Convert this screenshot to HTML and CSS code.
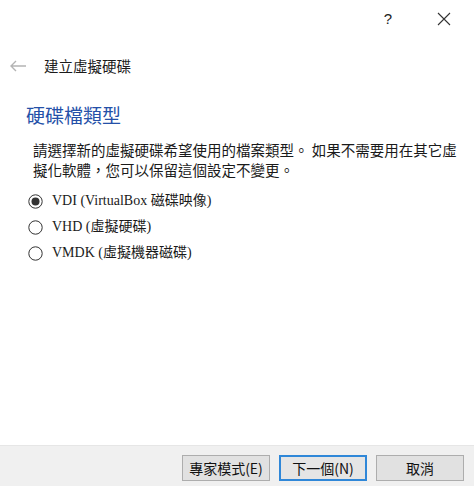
FILE: index.html
```html
<!DOCTYPE html>
<html lang="zh-Hant">
<head>
<meta charset="utf-8">
<title>建立虛擬硬碟</title>
<link rel="stylesheet" href="styles.css">
</head>
<body>
<div class="window">
  <div class="titlebar">
    <span class="help">?</span>
    <svg class="close" width="14" height="14" viewBox="0 0 14 14"><path d="M1 1 L13 13 M13 1 L1 13" stroke="#333" stroke-width="1.1" fill="none"/></svg>
  </div>
  <div class="nav">
    <svg class="back" width="18" height="12" viewBox="0 0 18 12"><path d="M17 6 H2 M7 1 L2 6 L7 11" stroke="#b4b4b4" stroke-width="1.4" fill="none"/></svg>
    <span class="nav-title">建立虛擬硬碟</span>
  </div>
  <div class="content">
    <h1 class="heading">硬碟檔類型</h1>
    <p class="desc">請選擇新的虛擬硬碟希望使用的檔案類型。 如果不需要用在其它虛擬化軟體，您可以保留這個設定不變更。</p>
    <div class="options">
      <div class="option">
        <svg class="radio" width="15" height="15" viewBox="0 0 15 15"><circle cx="7.5" cy="7.5" r="6.7" fill="#fff" stroke="#333" stroke-width="1"/><circle cx="7.5" cy="7.5" r="4" fill="#333"/></svg>
        <span class="label">VDI (VirtualBox 磁碟映像)</span>
      </div>
      <div class="option">
        <svg class="radio" width="15" height="15" viewBox="0 0 15 15"><circle cx="7.5" cy="7.5" r="6.7" fill="#fff" stroke="#333" stroke-width="1"/></svg>
        <span class="label">VHD (虛擬硬碟)</span>
      </div>
      <div class="option">
        <svg class="radio" width="15" height="15" viewBox="0 0 15 15"><circle cx="7.5" cy="7.5" r="6.7" fill="#fff" stroke="#333" stroke-width="1"/></svg>
        <span class="label">VMDK (虛擬機器磁碟)</span>
      </div>
    </div>
  </div>
  <div class="footer">
    <button class="btn">專家模式(E)</button>
    <button class="btn default">下一個(N)</button>
    <button class="btn">取消</button>
  </div>
</div>
</body>
</html>
```

FILE: styles.css
```css
html, body {
  margin: 0;
  padding: 0;
  background: #fff;
}
body {
  width: 474px;
  height: 488px;
  overflow: hidden;
  font-family: "Noto Sans CJK TC", "Noto Sans", sans-serif;
  color: #1a1a1a;
}
.window {
  display: flex;
  flex-direction: column;
  height: 488px;
}
.titlebar {
  height: 38px;
  display: flex;
  align-items: center;
  justify-content: flex-end;
  padding-right: 23px;
  gap: 45px;
}
.help {
  font-family: "Liberation Sans", sans-serif;
  font-size: 15px;
  line-height: 16px;
  color: #222;
}
.close {
  display: block;
}
.nav {
  height: 22px;
  margin-top: 17px;
  display: flex;
  align-items: center;
  padding-left: 9px;
}
.back {
  display: block;
}
.nav-title {
  margin-left: 17px;
  font-size: 14.5px;
  line-height: 22px;
  color: #1a1a1a;
}
.content {
  flex: 1;
}
.heading {
  margin: 26px 0 0 26px;
  font-size: 19px;
  font-weight: normal;
  line-height: 24px;
  color: #2450a8;
}
.desc {
  margin: 13px 0 0 0;
  padding: 0 11px 0 33px;
  font-size: 14.5px;
  line-height: 20px;
  color: #1a1a1a;
}
.options {
  margin-top: 8px;
  display: flex;
  flex-direction: column;
}
.option {
  height: 26px;
  display: flex;
  align-items: center;
  padding-left: 28px;
}
.radio {
  display: block;
  flex: none;
}
.label {
  margin-left: 9px;
  font-family: "Liberation Serif", "Noto Sans CJK TC", serif;
  font-size: 14px;
  line-height: 20px;
  color: #1a1a1a;
}
.footer {
  height: 41px;
  margin-bottom: 2px;
  background: #f0f0f0;
  border-top: 1px solid #e6e6e6;
  box-sizing: border-box;
  display: flex;
  justify-content: flex-end;
  align-items: flex-start;
  padding: 9px 10px 0 0;
  gap: 9px;
}
.btn {
  width: 88px;
  height: 26px;
  box-sizing: border-box;
  border: 1px solid #adadad;
  background: #e1e1e1;
  font-family: "Noto Sans CJK TC", sans-serif;
  font-size: 14px;
  line-height: 20px;
  color: #111;
  padding: 0;
  margin: 0;
}
.btn.default {
  border: 2px solid #2f87d8;
  background: #e5e5e5;
}
```
